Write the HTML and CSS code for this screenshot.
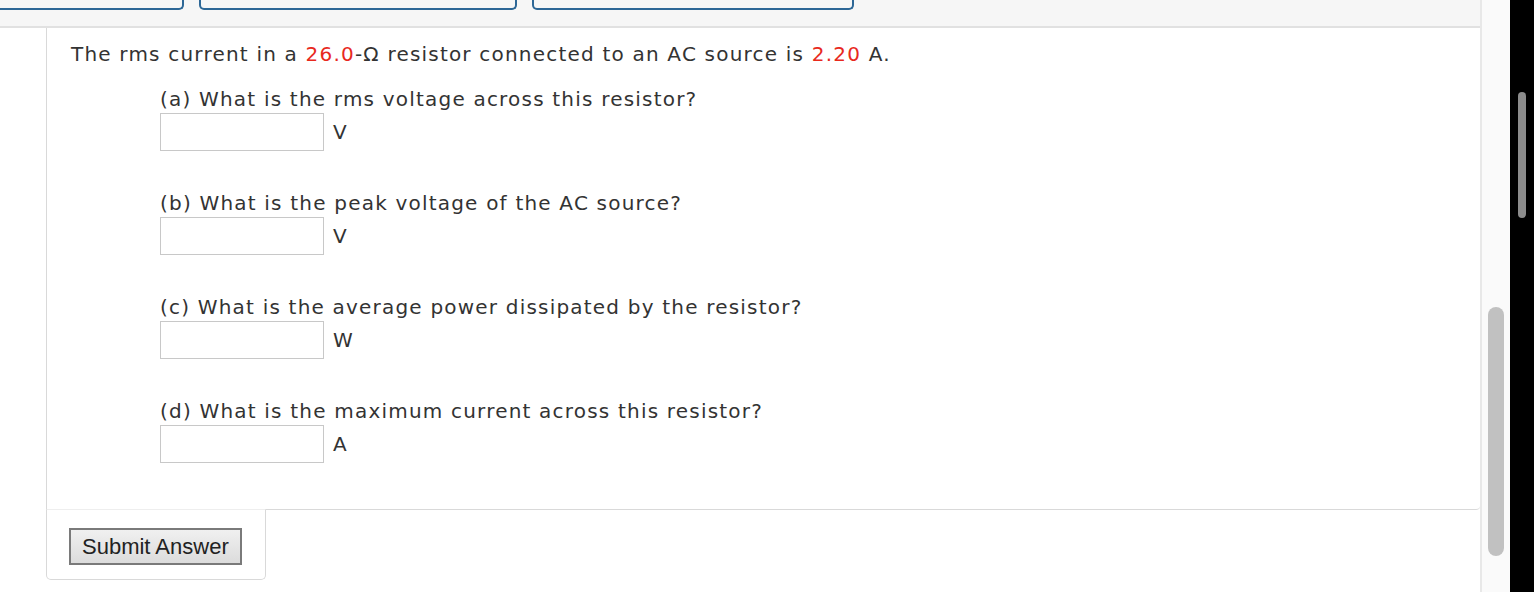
FILE: index.html
```html
<!DOCTYPE html>
<html>
    <head>
        <title>Question</title>
        <link rel="stylesheet" href="styles.css">
    </head>
    <body>
        <div class="window">
            <div class="page">
                <div class="tabs">
                    <div class="tab first"></div>
                    <div class="tab second"></div>
                    <div class="tab third"></div>
                </div>
                <div class="content">
                    <div class="panel">
                        <p class="intro">
                            The rms current in a <span class="red">26.0</span>-&Omega; resistor connected to an AC source is <span class="red">2.20</span> A.
                        </p>
                        <div class="part">
                            <div class="question">(a) What is the rms voltage across this resistor?</div>
                            <div class="answer"><input type="text"> <span class="unit">V</span></div>
                        </div>
                        <div class="part">
                            <div class="question">(b) What is the peak voltage of the AC source?</div>
                            <div class="answer"><input type="text"> <span class="unit">V</span></div>
                        </div>
                        <div class="part">
                            <div class="question">(c) What is the average power dissipated by the resistor?</div>
                            <div class="answer"><input type="text"> <span class="unit">W</span></div>
                        </div>
                        <div class="part">
                            <div class="question">(d) What is the maximum current across this resistor?</div>
                            <div class="answer"><input type="text"> <span class="unit">A</span></div>
                        </div>
                    </div>
                    <div class="submit-box">
                        <input class="submit" type="submit" value="Submit Answer">
                    </div>
                </div>
            </div>
            <div class="track">
                <div class="thumb"></div>
            </div>
            <div class="edge">
                <div class="edge-thumb"></div>
            </div>
        </div>
    </body>
</html>
```

FILE: styles.css
```css
html, body {
    margin: 0;
    height: 100%;
    overflow: hidden;
}
body {
    font-family: "DejaVu Sans", Verdana, sans-serif;
    color: #333;
    background: #fff;
}
.window {
    display: flex;
    height: 592px;
}
.page {
    flex: 1;
    min-width: 0;
}
.tabs {
    display: flex;
    gap: 15px;
    height: 26px;
    background: #f6f6f6;
    border-bottom: 2px solid #e1e1e1;
}
.tab {
    height: 8px;
    border: 2px solid #2d6796;
    border-top: none;
    border-radius: 0 0 5px 5px;
}
.first {
    width: 190px;
    margin-left: -10px;
}
.second {
    width: 314px;
}
.third {
    width: 318px;
}
.content {
    margin-left: 46px;
}
.panel {
    padding: 14px 0 0 24px;
    box-sizing: border-box;
    height: 482px;
    border-left: 1px solid #d9d9d9;
    border-bottom: 1px solid #d9d9d9;
    border-bottom-right-radius: 4px;
}
.intro, .question, .answer {
    font-size: 20px;
    letter-spacing: 1.2px;
}
.intro {
    margin: 0;
    line-height: 24px;
}
.red {
    color: #e8291d;
}
.part {
    margin: 21px 0 0 89px;
}
.part + .part {
    margin-top: 40px;
}
.question {
    line-height: 24px;
}
.answer {
    display: flex;
    align-items: center;
    gap: 9px;
    margin-top: 2px;
}
.answer input {
    width: 164px;
    height: 38px;
    box-sizing: border-box;
    margin: 0;
    border: 1px solid #c8c8c8;
    background: #fff;
}
.submit-box {
    width: 220px;
    height: 71px;
    box-sizing: border-box;
    padding: 18px 0 0 22px;
    margin-top: -1px;
    border: 1px solid #d9d9d9;
    border-top-color: #eeeeee;
    border-radius: 0 0 5px 5px;
}
.submit {
    height: 37px;
    padding: 0 11px;
    font-family: "Liberation Sans", Arial, sans-serif;
    font-size: 22px;
    color: #222;
    background: linear-gradient(#f0f0f0, #dcdcdc);
    border: 2px solid #7a7a7a;
    border-radius: 0;
}
.track {
    width: 28px;
    background: #fafafa;
    border-left: 2px solid #e8e8e8;
}
.thumb {
    width: 16px;
    height: 249px;
    margin: 307px 0 0 6px;
    background: #c1c1c1;
    border-radius: 8px;
}
.edge {
    width: 24px;
    background: #000;
}
.edge-thumb {
    width: 8px;
    height: 126px;
    margin: 92px 0 0 8px;
    background: #8c8c8c;
    border-radius: 4px;
}
```
